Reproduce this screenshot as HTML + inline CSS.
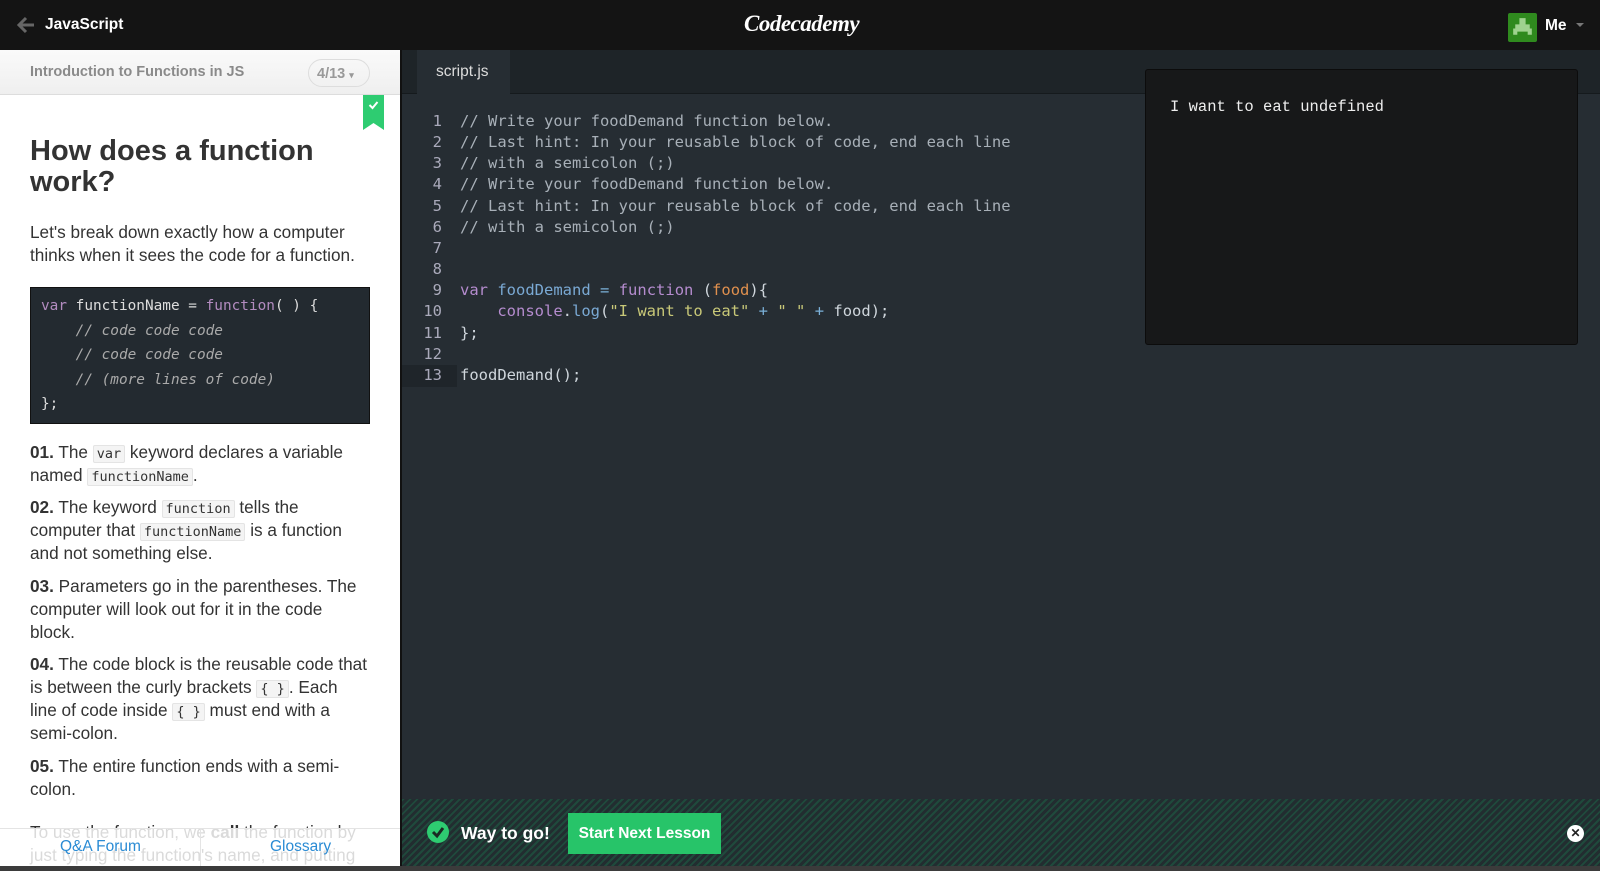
<!DOCTYPE html>
<html><head><meta charset="utf-8"><style>
*{margin:0;padding:0;box-sizing:border-box}
body{width:1600px;height:871px;overflow:hidden;background:#3b3b3b;font-family:"Liberation Sans",sans-serif;position:relative}
.top{position:absolute;left:0;top:0;width:1600px;height:50px;background:#141414}
.top .back{position:absolute;left:16px;top:15px}
.top .js{position:absolute;left:45px;top:16px;color:#fff;font-weight:bold;font-size:15.5px}
.logo{position:absolute;left:744px;top:11px;color:#fff;font-family:"Liberation Serif",serif;font-style:italic;font-weight:bold;font-size:23px;letter-spacing:-0.5px}
.av{position:absolute;left:1508px;top:13px;width:29px;height:29px;background:#2f8a1e;border-radius:2px}
.me{position:absolute;left:1545px;top:17px;color:#fff;font-weight:bold;font-size:15.5px}
.caret{position:absolute;left:1576px;top:23px;border:4px solid transparent;border-top:4px solid #777}
.left{position:absolute;left:0;top:50px;width:400px;height:816px;background:#fff;overflow:hidden}
.lh{height:45px;background:linear-gradient(#fafafa,#efefef);border-bottom:1px solid #ddd;position:relative}
.lh .t{position:absolute;left:30px;top:14px;color:#8a8a8a;font-weight:bold;font-size:14.5px}
.lh .p{position:absolute;left:308px;top:9px;width:62px;height:28px;border:1px solid #ddd;border-radius:14px;color:#999;font-size:14.5px;font-weight:bold;padding:6px 0 0 8px}
.bm{position:absolute;left:363px;top:45px;width:21px;height:35px;background:#2ecc71;clip-path:polygon(0 0,100% 0,100% 100%,50% 80%,0 100%)}
.content{position:absolute;left:30px;top:86px;width:339px;color:#333;font-size:17.2px;line-height:23px}
h1{font-size:29px;line-height:31px;font-weight:bold;color:#333;margin-bottom:23px}
.content p{margin-bottom:9.5px}
.code{background:#232a30;border:1px solid #111;margin:20px 0 17px;width:340px;padding:6px 10px;font-family:"DejaVu Sans Mono",monospace;font-size:14.4px;line-height:24.5px;color:#ddd}
.code i{color:#aaa}
.code .k{color:#b38cc0}
code{font-family:"DejaVu Sans Mono",monospace;font-size:13.5px;line-height:1;background:#f4f4f4;border:1px solid #e4e4e4;padding:0 3px;border-radius:2px}
.foot{position:absolute;left:0;top:778px;width:400px;height:38px;border-top:1px solid #e4e4e4;background:rgba(255,255,255,0.82);color:#2a8bd4;font-size:15.5px}
.foot span{position:absolute;top:9px}
.foot .d{position:absolute;left:200px;top:0;width:1px;height:38px;background:#e4e4e4}
.right{position:absolute;left:400px;top:50px;width:1200px;height:816px;background:#262d33;border-left:2px solid #111}
.tabbar{height:44px;background:#1e2428;border-bottom:1px solid #151a1d;position:relative}
.tab{position:absolute;left:15px;top:0;width:93px;height:45px;background:#262d33;color:#ddd;font-size:15.5px;padding:13px 0 0 19px}
.ed{position:absolute;left:0;top:61px;font-family:"DejaVu Sans Mono",monospace;font-size:15.5px;line-height:21.15px;color:#cfd6dc;white-space:pre}
.ln{position:absolute;left:0;width:40px;text-align:right;color:#aab}
.cm{color:#a8b0b8}.kw{color:#b58ccf}.fn{color:#7aa9d4}.or{color:#e0904e}.st{color:#c8c878}.pl{color:#7ab0d8}
.out{position:absolute;left:743px;top:19px;width:433px;height:276px;background:#171819;border:1px solid #0c0c0c;border-radius:3px;color:#eee;font-family:"Liberation Mono",monospace;font-size:15.5px;padding:28px 24px}
.bb{position:absolute;left:0;top:749px;width:1200px;height:67px;background:repeating-linear-gradient(135deg,#1f4a3c 0 2px,#222d30 2px 5px)}
.ok{position:absolute;left:25px;top:22px;width:22px;height:22px;border-radius:50%;background:#2ecc71}
.way{position:absolute;left:59px;top:24px;color:#fff;font-weight:bold;font-size:17.5px}
.btn{position:absolute;left:166px;top:14px;width:153px;height:41px;background:#27c469;color:#fff;font-weight:bold;font-size:15.5px;text-align:center;line-height:41px}
.x{position:absolute;left:1165px;top:26px;width:17px;height:17px;border-radius:50%;background:#fff;color:#222;font-size:12px;text-align:center;line-height:17px;font-weight:bold}
</style></head><body>
<div class="top">
<svg class="back" width="20" height="20" viewBox="0 0 20 20"><path d="M18 10H3M10 3L3 10l7 7" stroke="#666" stroke-width="3" fill="none"/></svg>
<div class="js">JavaScript</div>
<div class="logo">Codecademy</div>
<div class="av"><svg width="29" height="29" viewBox="0 0 28 28"><path d="M11 5h6v6h4v4h2v6h-4v-3h-10v3h-4v-6h2v-4h4z" fill="#9fd28f"/></svg></div>
<div class="me">Me</div><div class="caret"></div>
</div>
<div class="left">
<div class="lh"><div class="t">Introduction to Functions in JS</div><div class="p">4/13 <span style="font-size:9px">▾</span></div></div>
<div class="bm"><svg width="21" height="20" viewBox="0 0 20 20"><path d="M6 10l3 3 5-6" stroke="#fff" stroke-width="2" fill="none"/></svg></div>
<div class="content">
<h1>How does a function work?</h1>
<p>Let's break down exactly how a computer thinks when it sees the code for a function.</p>
<div class="code"><span class="k">var</span> functionName = <span class="k">function</span>( ) {<br><i>&nbsp;&nbsp;&nbsp;&nbsp;// code code code</i><br><i>&nbsp;&nbsp;&nbsp;&nbsp;// code code code</i><br><i>&nbsp;&nbsp;&nbsp;&nbsp;// (more lines of code)</i><br>};</div>
<p><b>01.</b> The <code>var</code> keyword declares a variable named <code>functionName</code>.</p>
<p><b>02.</b> The keyword <code>function</code> tells the computer that <code>functionName</code> is a function and not something else.</p>
<p><b>03.</b> Parameters go in the parentheses. The computer will look out for it in the code block.</p>
<p><b>04.</b> The code block is the reusable code that is between the curly brackets <code>{ }</code>. Each line of code inside <code>{ }</code> must end with a semi-colon.</p>
<p><b>05.</b> The entire function ends with a semi-colon.</p>
<p style="margin-top:20px;color:#333">To use the function, we <b>call</b> the function by just typing the function's name, and putting</p>
</div>
<div class="foot"><span style="left:60px">Q&amp;A Forum</span><div class="d"></div><span style="left:270px">Glossary</span></div>
</div>
<div class="right">
<div class="tabbar"><div class="tab">script.js</div></div>
<div style="position:absolute;left:0;top:315px;width:55px;height:22px;background:#1f252a"></div>
<div class="ed"><div class="ln">1
2
3
4
5
6
7
8
9
10
11
12
13</div><div style="position:absolute;left:58px"><span class="cm">// Write your foodDemand function below.
// Last hint: In your reusable block of code, end each line
// with a semicolon (;)
// Write your foodDemand function below.
// Last hint: In your reusable block of code, end each line
// with a semicolon (;)</span>


<span class="kw">var</span> <span class="fn">foodDemand</span> <span class="pl">=</span> <span class="kw">function</span> (<span class="or">food</span>){
    <span class="kw">console</span>.<span class="fn">log</span>(<span class="st">"I want to eat"</span> <span class="pl">+</span> <span class="st">" "</span> <span class="pl">+</span> food);
};

foodDemand();</div></div>
<div class="out">I want to eat undefined</div>
<div class="bb"><div class="ok"><svg width="22" height="22" viewBox="0 0 22 22"><path d="M6 11l4 4 6-8" stroke="#1a2a22" stroke-width="3" fill="none"/></svg></div><div class="way">Way to go!</div><div class="btn">Start Next Lesson</div><div class="x">✕</div></div>
</div>
</body></html>
